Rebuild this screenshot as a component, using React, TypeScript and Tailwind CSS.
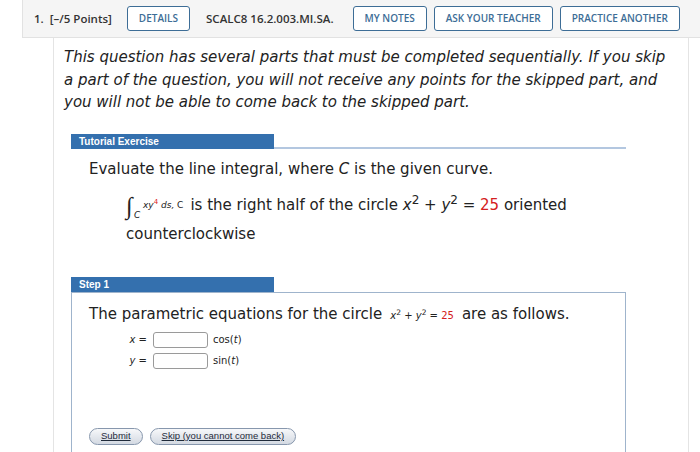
import React from 'react'

const verdana = { fontFamily: '"DejaVu Sans", Verdana, sans-serif' }
const arial = { fontFamily: '"Liberation Sans", Arial, sans-serif' }

function HeaderButton({ label }: { label: string }) {
  return (
    <div className="shrink-0 h-[25px] px-[11px] flex items-center border border-[#3d6d96] rounded-[3px] bg-white text-[#3d6d96] text-[10px] font-semibold whitespace-nowrap">
      {label}
    </div>
  )
}

function PillButton({ label }: { label: string }) {
  return (
    <button
      className="h-[17px] px-[11px] rounded-full border border-[#8797ad] bg-gradient-to-b from-[#f7f8fa] to-[#d3d9e2] text-[9.5px] leading-none text-[#1f2a3a] underline whitespace-nowrap"
      style={arial}
    >
      {label}
    </button>
  )
}

export default function App() {
  return (
    <div className="w-[700px] h-[452px] bg-white overflow-hidden" style={verdana}>
      {/* question header */}
      <div
        className="ml-[22px] h-[38px] bg-[#f5f5f5] border-l border-b border-[#e2e2e2] flex items-center pl-[11px] text-[#333] text-[11.5px] font-semibold whitespace-nowrap"
        style={{ fontFamily: '"Open Sans", sans-serif' }}
      >
        <span className="shrink-0">1.</span>
        <span className="ml-[6px] shrink-0">[–/5 Points]</span>
        <div className="ml-[15px] shrink-0">
          <HeaderButton label="DETAILS" />
        </div>
        <span className="ml-[16px] shrink-0">SCALC8 16.2.003.MI.SA.</span>
        <div className="ml-[19px] flex gap-[7px] shrink-0">
          <HeaderButton label="MY NOTES" />
          <HeaderButton label="ASK YOUR TEACHER" />
          <HeaderButton label="PRACTICE ANOTHER" />
        </div>
      </div>

      {/* question body */}
      <div className="ml-[53px] w-[636px] h-[414px] border-l border-r border-[#e4e4e4] pl-[10px]">
        <p className="pt-[8px] w-[606px] text-[15px] leading-[22.5px] italic text-[#222]">
          This question has several parts that must be completed sequentially. If you skip a part of the question, you will not receive any points for the skipped part, and you will not be able to come back to the skipped part.
        </p>

        {/* tutorial exercise */}
        <div className="mt-[20px] ml-[7px] w-[555px] flex items-end">
          <div className="w-[203px] h-[15px] bg-[#3470ae] text-white text-[10px] font-bold pl-[8px] leading-[15px]" style={arial}>
            Tutorial Exercise
          </div>
          <div className="flex-1 h-[2px] bg-[#b3c7e0]" />
        </div>

        <div className="pl-[25px] pt-[9px] text-[#222]">
          <p className="text-[15px] leading-[22px]">
            Evaluate the line integral, where <i>C</i> is the given curve.
          </p>
          <div className="pl-[37px] pt-[12px] flex items-center">
            <span className="relative inline-flex items-center w-[15px] h-[28px]">
              <span className="text-[24px] italic leading-none" style={{ fontFamily: '"Liberation Serif", serif' }}>∫</span>
              <span className="absolute left-[8px] bottom-[-3px] text-[9px] italic">C</span>
            </span>
            <span className="text-[9px] italic ml-[2px]">
              xy<sup className="text-[7px] text-[#d22] not-italic">4</sup> ds, <span className="not-italic">C</span>
            </span>
            <span className="ml-[7px] text-[15px]">
              is the right half of the circle <i>x</i>
              <sup className="text-[12px]">2</sup> + <i>y</i>
              <sup className="text-[12px]">2</sup> = <span className="text-[#d42020]">25</span> oriented
            </span>
          </div>
          <p className="pl-[37px] pt-[3px] text-[15px] leading-[22px]">counterclockwise</p>
        </div>

        {/* step 1 */}
        <div className="mt-[32px] ml-[7px] w-[203px] h-[15px] bg-[#3470ae] text-white text-[10px] font-bold pl-[8px] leading-[15px]" style={arial}>
          Step 1
        </div>
        <div className="ml-[7px] w-[555px] h-[200px] border border-[#9fb4cc] pl-[17px] pt-[10px] text-[#222]">
          <p className="text-[15px] leading-[22px] flex items-baseline">
            The parametric equations for the circle
            <span className="text-[10px] mx-[8px]">
              <i>x</i>
              <sup>2</sup> + <i>y</i>
              <sup>2</sup> = <span className="text-[#d42020]">25</span>
            </span>
            are as follows.
          </p>
          <div className="mt-[5px] pl-[24px] flex flex-col gap-[5px] text-[10px]">
            <div className="flex items-center">
              <span className="w-[40px] text-right pr-[6px] italic">x =</span>
              <span className="w-[55px] h-[16px] border border-[#9a9a9a] rounded-[3px] bg-white" />
              <span className="ml-[5px]">cos(<i>t</i>)</span>
            </div>
            <div className="flex items-center">
              <span className="w-[40px] text-right pr-[6px] italic">y =</span>
              <span className="w-[55px] h-[16px] border border-[#9a9a9a] rounded-[3px] bg-white" />
              <span className="ml-[5px]">sin(<i>t</i>)</span>
            </div>
          </div>
          <div className="mt-[59px] flex gap-[7px]">
            <PillButton label="Submit" />
            <PillButton label="Skip (you cannot come back)" />
          </div>
        </div>
      </div>
    </div>
  )
}
